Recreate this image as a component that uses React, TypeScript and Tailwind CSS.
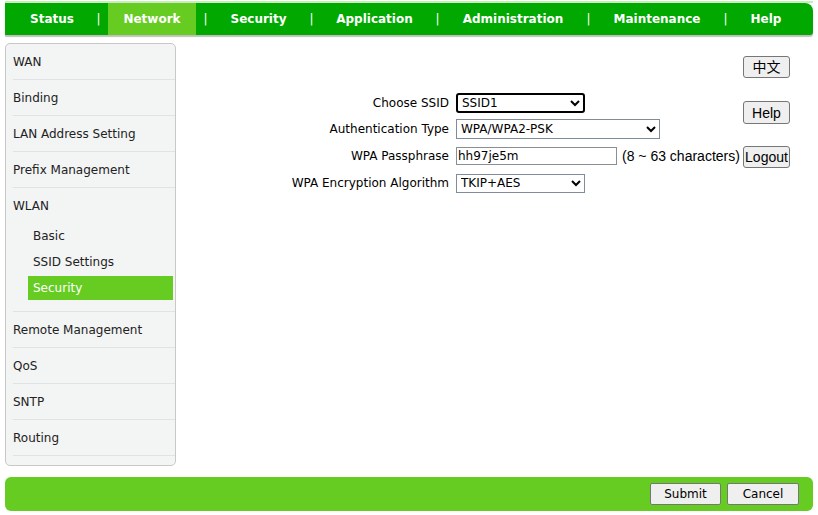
import React from "react";

const navItems: { label: string; w: string; active?: boolean }[] = [
  { label: "Status", w: "w-[74px]" },
  { label: "Network", w: "w-[88px]", active: true },
  { label: "Security", w: "w-[87px]" },
  { label: "Application", w: "w-[107px]" },
  { label: "Administration", w: "w-[132px]" },
  { label: "Maintenance", w: "w-[118px]" },
  { label: "Help", w: "w-[62px]" },
];

const topMenu = ["WAN", "Binding", "LAN Address Setting", "Prefix Management"];
const bottomMenu = ["Remote Management", "QoS", "SNTP", "Routing"];

function SideItem({ label }: { label: string }) {
  return (
    <div className="ml-[7px] h-[36px] border-b border-[#dfe3e6] flex items-center text-[12px] text-[#222]">
      {label}
    </div>
  );
}

const btn =
  "bg-[#efefef] border border-[#767676] rounded-[3px] text-black font-['Liberation_Sans','Noto_Sans_CJK_SC',sans-serif] text-[14px] leading-none flex items-center justify-center";

export default function App() {
  return (
    <div className="w-[818px] h-[515px] bg-white font-['DejaVu_Sans',sans-serif] overflow-hidden">
      {/* Top navigation */}
      <div className="mx-[5px] pt-[1px]">
        <div className="h-[2px] bg-[#c8ecbb]" />
        <div className="h-[32px] bg-[#00a800] rounded-tr-[8px] rounded-br-[3px] shadow-[0_2px_1px_rgba(0,0,0,0.25)] flex items-stretch pl-[10px]">
          {navItems.map((it, i) => (
            <React.Fragment key={it.label}>
              {i > 0 && (
                <div className="w-[19px] flex items-center justify-center text-white text-[12px]">
                  |
                </div>
              )}
              <div
                className={`${it.w} flex items-center justify-center text-white font-bold text-[12px] ${
                  it.active ? "bg-[#66cc22]" : ""
                }`}
              >
                {it.label}
              </div>
            </React.Fragment>
          ))}
        </div>
      </div>

      {/* Main */}
      <div className="flex mt-[8px] h-[423px]">
        {/* Sidebar */}
        <div className="ml-[5px] w-[171px] h-[423px] border border-[#c8c8c8] rounded-[5px] bg-[#f3f4f4] flex flex-col">
          {topMenu.map((m) => (
            <SideItem key={m} label={m} />
          ))}
          <div className="ml-[7px] border-b border-[#dfe3e6] pb-[11px]">
            <div className="h-[36px] flex items-center text-[12px] text-[#222]">WLAN</div>
            <div className="ml-[15px] mr-[2px] flex flex-col gap-[2px]">
              <div className="h-[24px] pl-[5px] flex items-center text-[12px] text-[#222]">Basic</div>
              <div className="h-[24px] pl-[5px] flex items-center text-[12px] text-[#222]">SSID Settings</div>
              <div className="h-[24px] pl-[5px] flex items-center text-[12px] text-white bg-[#66cc22]">Security</div>
            </div>
          </div>
          {bottomMenu.map((m) => (
            <SideItem key={m} label={m} />
          ))}
        </div>

        {/* Content */}
        <div className="flex-1 flex">
          <div className="flex-1 pt-[47px]">
            <div className="grid grid-cols-[273px_1fr] gap-x-[7px] text-[12px] text-black">
              <div className="h-[26px] flex items-center justify-end">Choose SSID</div>
              <div className="h-[26px] flex items-center">
                <select className="w-[129px] h-[20px] border-2 border-black rounded-[3px] text-[12px] pl-0 font-['DejaVu_Sans',sans-serif] bg-white">
                  <option>SSID1</option>
                </select>
              </div>

              <div className="h-[26px] flex items-center justify-end">Authentication Type</div>
              <div className="h-[26px] flex items-center">
                <select className="w-[204px] h-[20px] border border-[#7f8c99] text-[12px] pl-0 font-['DejaVu_Sans',sans-serif] bg-white">
                  <option>WPA/WPA2-PSK</option>
                </select>
              </div>

              <div className="h-[28px] flex items-center justify-end">WPA Passphrase</div>
              <div className="h-[28px] flex items-center">
                <input
                  readOnly
                  value="hh97je5m"
                  className="w-[161px] h-[18px] border border-[#8a8f94] text-[12px] px-[1px] font-['DejaVu_Sans',sans-serif] bg-white"
                />
                <span className="ml-[5px] font-['Liberation_Sans',sans-serif] text-[14px]">
                  (8 ~ 63 characters)
                </span>
              </div>

              <div className="h-[26px] flex items-center justify-end">WPA Encryption Algorithm</div>
              <div className="h-[26px] flex items-center">
                <select className="w-[129px] h-[19px] border border-[#7f8c99] text-[12px] pl-0 font-['DejaVu_Sans',sans-serif] bg-white">
                  <option>TKIP+AES</option>
                </select>
              </div>
            </div>
          </div>
          <div className="w-[47px] mr-[28px] pt-[13px] flex flex-col">
            <button className={`${btn} h-[22px]`}>中文</button>
            <button className={`${btn} h-[23px] mt-[23px]`}>Help</button>
            <button className={`${btn} h-[22px] mt-[22px]`}>Logout</button>
          </div>
        </div>
      </div>

      {/* Footer */}
      <div className="mx-[5px] mt-[11px] h-[34px] bg-[#66cc22] rounded-[6px] flex items-center justify-end pr-[14px] gap-[6px]">
        <button className="w-[71px] h-[22px] bg-[#efefef] border border-[#767676] rounded-[2px] text-[12px] text-black flex items-center justify-center">
          Submit
        </button>
        <button className="w-[72px] h-[22px] bg-[#efefef] border border-[#767676] rounded-[2px] text-[12px] text-black flex items-center justify-center">
          Cancel
        </button>
      </div>
    </div>
  );
}
